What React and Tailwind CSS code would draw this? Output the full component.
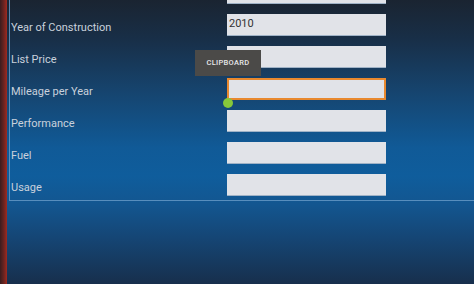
import React from 'react';

const rows = [
  { label: '', value: '' },
  { label: 'Year of Construction', value: '2010' },
  { label: 'List Price', value: '' },
  { label: 'Mileage per Year', value: '', focused: true },
  { label: 'Performance', value: '' },
  { label: 'Fuel', value: '' },
  { label: 'Usage', value: '' },
];

export default function App() {
  return (
    <div
      className="relative w-[474px] h-[284px] overflow-hidden flex bg-[linear-gradient(180deg,#1a2431_0%,#182f48_14%,#16446e_32%,#105a97_52%,#0f5d9c_62%,#135690_72%,#154574_84%,#172f4c_100%)]"
      style={{ fontFamily: 'Roboto, "Liberation Sans", sans-serif' }}
    >
      {/* red strip on the left edge */}
      <div className="w-[7px] h-full bg-[linear-gradient(90deg,#3a1c1e_0%,#6a2420_55%,#a02a20_100%)]" />

      <div className="ml-[2px] flex-1 h-[201px] border-l border-b border-[#6a9cc8]/80 overflow-hidden">
        <div className="-mt-[23px]">
          {rows.map((r, i) => (
            <div key={i} className="h-[32px] flex items-center">
              <div className="w-[217px] pl-[1px] pt-[5px] text-[11px] text-[#c9d1dc] leading-none">
                {r.label}
              </div>
              <div
                className={
                  'w-[159px] h-[22px] flex items-center px-[2px] text-[11px] text-[#333] bg-[#e1e3e8] ' +
                  (r.focused ? 'border-2 border-[#e8892f]' : 'border-b border-[#9fb2c6]')
                }
              >
                {r.value}
              </div>
            </div>
          ))}
        </div>
      </div>

      {/* clipboard tooltip */}
      <div className="absolute left-[195px] top-[50px] w-[66px] h-[26px] bg-[#4b4a48] flex items-center justify-center text-[7.5px] font-medium tracking-[0.3px] text-[#e8e8e8]">
        CLIPBOARD
      </div>

      {/* selection handle */}
      <div className="absolute left-[223px] top-[98px] w-[10px] h-[10px] rounded-full bg-[#86c83a]" />
    </div>
  );
}
